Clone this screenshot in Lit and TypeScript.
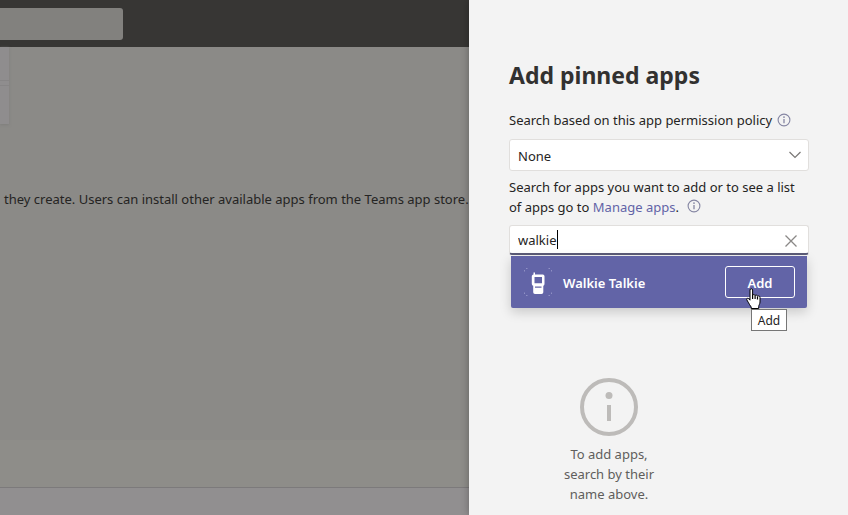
import { LitElement, html, css } from "lit";
import { customElement, state } from "lit/decorators.js";

const infoIcon = html`<svg class="info" viewBox="0 0 14 14" aria-hidden="true">
  <circle cx="7" cy="7" r="5.900" fill="none" stroke="currentColor" stroke-width="1.100" />
  <path d="M7 6v4.200" stroke="currentColor" stroke-width="1.300" />
  <circle cx="7" cy="4.100" r="0.900" fill="currentColor" />
</svg>`;

@customElement("app-root")
export class AppRoot extends LitElement {
  static styles = css`
    :host {
      display: block;
      font: 13px/20px "Noto Sans", "Open Sans", sans-serif;
      color: #252423;
    }
    *,
    *::before {
      box-sizing: border-box;
    }
    .layout {
      display: flex;
      min-height: 100vh;
      background: #8b8a87;
    }
    .page {
      flex: 1;
      min-width: 0;
      overflow: hidden;
      display: flex;
      flex-direction: column;
    }
    .topbar {
      height: 47px;
      flex: none;
      display: flex;
      align-items: center;
      background: #373634;
    }
    .topbar input {
      width: 123px;
      height: 32px;
      border: 0;
      padding: 0 8px;
      background: #82817e;
      border-radius: 0 3px 3px 0;
      outline: none;
    }
    .card {
      width: 9px;
      height: 77px;
      flex: none;
      background: #8f8d8e;
      box-shadow: 0 1px 3px #7f7e7c;
      padding-top: 33px;
    }
    .card hr {
      margin: 0;
      border: 0;
      border-top: 1px solid #878586;
      height: 5px;
    }
    .note {
      margin: 65px 0 0 4px;
      white-space: nowrap;
      flex: 1;
    }
    .strip {
      height: 47px;
      flex: none;
      background: #8e8d89;
    }
    .footer {
      height: 28px;
      flex: none;
      background: #918f90;
      border-top: 1px solid #7c7a7b;
    }
    .panel {
      position: relative;
      width: 379px;
      flex: none;
      padding: 60px 39px 8px 40px;
      background: #f3f3f3;
      box-shadow: 0 0 8px rgba(0, 0, 0, 0.3);
    }
    h1 {
      margin: 0 0 20px;
      font-size: 23px;
      line-height: 30px;
      font-weight: 700;
      color: #323130;
    }
    .label {
      display: flex;
      align-items: center;
      gap: 5px;
      height: 20px;
      margin-bottom: 9px;
    }
    .info {
      width: 14px;
      height: 14px;
      flex: none;
      color: #8586a3;
    }
    .box {
      display: grid;
      align-items: center;
      background: #fff;
      border: 1px solid #e1dfdd;
      border-radius: 3px;
    }
    .select {
      height: 32px;
    }
    .select > * {
      grid-area: 1 / 1;
    }
    .select svg {
      width: 12px;
      height: 8px;
      justify-self: end;
      margin-right: 7px;
      pointer-events: none;
    }
    select {
      appearance: none;
      width: 100%;
      height: 30px;
      border: 0;
      padding: 2px 8px 0;
      background: none;
      font: inherit;
      color: inherit;
      outline: none;
    }
    .hint {
      margin: 6px 0 8px;
    }
    .hint .info {
      vertical-align: -1px;
      margin-left: 5px;
    }
    a {
      color: #6264a7;
      text-decoration: none;
    }
    .search {
      display: flex;
      height: 30px;
      padding: 0 10px 0 8px;
      border-bottom: 2px solid #5b5b78;
    }
    .search input {
      field-sizing: content;
      min-width: 0;
      border: 0;
      padding: 0;
      margin: 0;
      font: inherit;
      color: inherit;
      background: none;
      outline: none;
      caret-color: transparent;
    }
    .caret {
      width: 1px;
      height: 19px;
      background: #000;
    }
    button {
      font: inherit;
      cursor: pointer;
    }
    .clear {
      margin-left: auto;
      padding: 3px 0 0;
      border: 0;
      background: none;
      display: flex;
    }
    .clear svg {
      width: 14px;
      height: 14px;
    }
    .result {
      display: flex;
      align-items: center;
      height: 52px;
      margin: 1px 2px 0;
      padding: 0 12px 0 13px;
      background: #6264a7;
      color: #fff;
      font-weight: 600;
      border-radius: 0 0 2px 2px;
      box-shadow: 0 4px 12px rgba(0, 0, 0, 0.18);
    }
    .result .logo {
      width: 28px;
      height: 28px;
      margin-right: 11px;
    }
    .name {
      padding-top: 2px;
    }
    .action {
      position: relative;
      margin-left: auto;
    }
    .add {
      width: 70px;
      height: 32px;
      padding: 2px 0 0;
      border: 1px solid #fff;
      border-radius: 3px;
      background: none;
      color: inherit;
    }
    .pointer {
      position: absolute;
      left: 21px;
      top: 22px;
      width: 17px;
      height: 22px;
    }
    .tip {
      position: absolute;
      left: 26px;
      top: 43px;
      width: 36px;
      height: 22px;
      border: 1px solid #767676;
      background: #fff;
      color: #252423;
      font-size: 12px;
      line-height: 22px;
      font-weight: 400;
      text-align: center;
    }
    .empty {
      width: 100px;
      margin: 70px 0 0 50px;
      color: #605e5c;
      text-align: center;
    }
    .empty svg {
      display: block;
      width: 58px;
      height: 58px;
      margin: 0 auto 8px;
    }
    .empty p {
      margin: 0;
    }
  `;

  @state() private query = "walkie";

  private onInput(e: Event) {
    this.query = (e.target as HTMLInputElement).value;
  }

  render() {
    return html`<div class="layout">
      <main class="page">
        <header class="topbar"><input type="search" aria-label="Search" /></header>
        <div class="card"><hr /><hr /></div>
        <p class="note">they create. Users can install other available apps from the Teams app store.</p>
        <div class="strip"></div>
        <footer class="footer"></footer>
      </main>
      <aside class="panel">
        <h1>Add pinned apps</h1>
        <label class="label" for="policy">Search based on this app permission policy ${infoIcon}</label>
        <div class="box select">
          <select id="policy"><option>None</option></select>
          <svg viewBox="0 0 12 8" aria-hidden="true">
            <path d="M.5 1l5.500 5.500L11.500 1" fill="none" stroke="#797775" stroke-width="1.200" />
          </svg>
        </div>
        <p class="hint">
          <label for="query">Search for apps you want to add or to see a list of apps go to
          <a href="#apps">Manage apps</a>.</label> ${infoIcon}
        </p>
        <div class="box search">
          <input id="query" type="text" .value=${this.query} @input=${this.onInput} />
          <span class="caret"></span>
          <button class="clear" aria-label="Clear" @click=${() => (this.query = "")}>
            <svg viewBox="0 0 14 14"><path d="M1.500 1.500l11 11M12.500 1.500l-11 11" stroke="#8a8886" stroke-width="1.300" /></svg>
          </button>
        </div>
        <div class="result">
          <svg class="logo" viewBox="0 0 28 28" aria-hidden="true">
            <path d="M.5 3.500v-1.500M2 .5h1.500M24.500 .5h1.500M27.500 2v1.500M.5 24.500v1.500M2 27.500h1.500M24.500 27.500h1.500M27.500 24.500v1.500" stroke="#8f90c4" fill="none" />
            <path
              fill="#fff"
              fill-rule="evenodd"
              d="M9.500 4.500h1.500v2h7.800a1.700 1.700 0 0 1 1.700 1.700v7.300c0 1.200-.3 1.800-1.200 2.300v6.400a1.800 1.800 0 0 1-1.800 1.800h-6.500a1.800 1.800 0 0 1-1.800-1.800v-6.400c-.9-.5-1.400-1.100-1.400-2.300v-7.300c0-.8.6-1.400 1.700-1.700zM10.500 9v6.300h7.500v-6.300zM11 18.500v1.300h6.500v-1.300z"
            />
          </svg>
          <span class="name">Walkie Talkie</span>
          <div class="action">
            <button class="add">Add</button>
            <span class="tip" role="tooltip">Add</span>
            <svg class="pointer" viewBox="0 0 17 22" aria-hidden="true">
              <path
                d="M4 2c0-1.700 2.600-1.700 2.600 0v5.200c.5-1 2.300-.8 2.500.4.500-.9 2.200-.6 2.400.6.700-.8 2.500-.3 2.500 1.300v4.500c0 2-1.300 3.200-1.300 4.500v2H5.200v-1.500c-1-1.500-2.200-3-3-4.800L.8 11.800c-.6-1.400 1-2.100 1.900-1.100l1.300 1.500z"
                fill="#fff"
                stroke="#000"
              />
              <path d="M6.600 7v4M9.100 7.500v3.500M11.500 8.500v3" stroke="#000" stroke-width="1.200" />
            </svg>
          </div>
        </div>
        <div class="empty">
          <svg viewBox="0 0 58 58" aria-hidden="true">
            <circle cx="29" cy="29" r="27" fill="none" stroke="#bdbbb9" stroke-width="4" />
            <circle cx="29" cy="17.500" r="3.500" fill="#bdbbb9" />
            <path d="M29 27v16" stroke="#bdbbb9" stroke-width="4" />
          </svg>
          <p>To add apps, search by their name above.</p>
        </div>
      </aside>
    </div>`;
  }
}
